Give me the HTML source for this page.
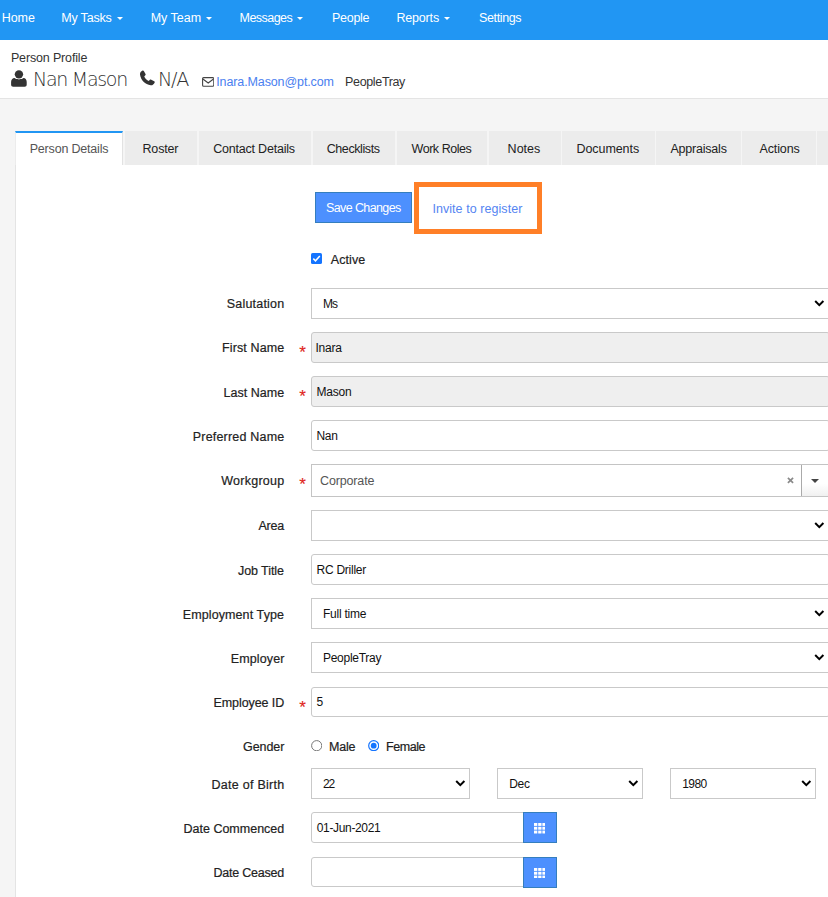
<!DOCTYPE html>
<html>
<head>
<meta charset="utf-8">
<title>Person Profile</title>
<style>
html,body{margin:0;padding:0;}
body{width:828px;height:897px;overflow:hidden;position:relative;background:#f5f5f5;font-family:"Liberation Sans","DejaVu Sans",sans-serif;font-size:12.5px;color:#333;}
.abs{position:absolute;}
.t{position:absolute;white-space:nowrap;}
#nav{left:0;top:0;width:828px;height:40px;background:#2196f3;}
.caret{position:absolute;width:0;height:0;border-left:3.8px solid transparent;border-right:3.8px solid transparent;border-top:3.6px solid #fff;top:16.6px;}
#head{left:0;top:40px;width:828px;height:58px;background:#fff;border-bottom:1px solid #e4e4e4;}
#tabbar{left:125px;top:131px;width:703px;height:33.5px;background:#ececec;}
.sep{position:absolute;top:131px;width:1.5px;height:33.5px;background:#f5f5f5;}
#tabact{left:15px;top:131px;width:107.7px;height:34px;background:#fff;border-top:2px solid #2196f3;border-right:1px solid #e2e2e2;border-left:1px solid #ececec;box-sizing:border-box;}
#panel{left:15px;top:164.5px;width:813px;height:733px;background:#fff;border-left:1px solid #e4e4e4;box-sizing:border-box;}
.inp{position:absolute;left:311px;width:519px;height:31px;box-sizing:border-box;border:1px solid #c9c9c9;border-radius:3px;background:#fff;}
.inp.dis{background:#efefef;}
.inp.sel{border-radius:0;}
.chev{position:absolute;width:11px;height:7px;}
.req{position:absolute;left:299.2px;color:#e0261c;font-size:17px;line-height:17px;white-space:nowrap;-webkit-text-stroke:0.15px #e0261c;}
.calb{position:absolute;left:523px;width:34px;height:31px;box-sizing:border-box;background:#4d90fe;border:1px solid #357ebd;}
</style>
</head>
<body>
<div id="nav" class="abs">
<span class="caret" style="left:117.2px"></span>
<span class="caret" style="left:205.9px"></span>
<span class="caret" style="left:297.3px"></span>
<span class="caret" style="left:444.1px"></span>
</div>
<div id="head" class="abs"></div>
<svg class="abs" style="left:11px;top:70px" width="16" height="17" viewBox="0 0 16 17"><path d="M0.1 12 C0.1 9.6 1.4 8.1 3.6 8 C5 9.6 11 9.6 12.4 8 C14.6 8.1 15.7 9.6 15.7 12 L15.7 14.7 C15.7 15.9 14.9 16.7 13.6 16.7 L2.2 16.7 C0.9 16.7 0.1 15.9 0.1 14.7 Z" fill="#333"/><circle cx="7.95" cy="4.35" r="5" fill="#fff"/><circle cx="7.95" cy="4.35" r="4.2" fill="#333"/></svg>
<svg class="abs" style="left:138.8px;top:70.2px" width="16.6" height="15.8" viewBox="0 0 16 16"><path d="M3.2 0.6 C3.7 0.3 4.2 0.5 4.5 1 L6.2 4 C6.5 4.5 6.4 5 6 5.4 L4.9 6.5 C5.8 8.4 7.6 10.2 9.5 11.1 L10.6 10 C11 9.6 11.5 9.5 12 9.8 L15 11.5 C15.5 11.8 15.7 12.3 15.4 12.8 C14.6 14.3 13.2 15.6 11.5 15.4 C5.8 14.6 1.4 10.2 0.6 4.5 C0.4 2.8 1.7 1.4 3.2 0.6 Z" fill="#333"/></svg>
<svg class="abs" style="left:202px;top:77.2px" width="12.4" height="9.8" viewBox="0 0 12.4 9.8"><rect x="0.6" y="0.6" width="11.2" height="8.6" rx="1" fill="none" stroke="#444" stroke-width="1.1"/><path d="M0.9 2 L6.2 6 L11.5 2" fill="none" stroke="#444" stroke-width="1.1"/></svg>
<div id="tabbar" class="abs"></div>
<div class="sep" style="left:197.0px"></div>
<div class="sep" style="left:311.0px"></div>
<div class="sep" style="left:395.3px"></div>
<div class="sep" style="left:487.0px"></div>
<div class="sep" style="left:560.6px"></div>
<div class="sep" style="left:654.5px"></div>
<div class="sep" style="left:740.7px"></div>
<div class="sep" style="left:815.5px"></div>
<div id="panel" class="abs"></div>
<div id="tabact" class="abs"></div>
<div class="abs" style="left:315px;top:192px;width:97px;height:31px;background:#4d90fe;border:1px solid #357ebd;box-sizing:border-box;"></div>
<div class="abs" style="left:414px;top:182px;width:128px;height:52px;box-sizing:border-box;border:5px solid #ff7f27;"></div>
<svg class="abs" style="left:311px;top:253px" width="11" height="11" viewBox="0 0 11 11"><rect x="0" y="0" width="11" height="11" rx="1.6" fill="#1474ff"/><path d="M2.3 5.6 L4.5 7.8 L8.8 3.1" fill="none" stroke="#fff" stroke-width="1.5"/></svg>
<div class="inp sel" style="top:288px;height:31px;left:311px;width:519px;"></div>
<svg class="chev" style="left:814px;top:300px" viewBox="0 0 11 7"><path d="M1.2 1 L5.3 5.1 L9.4 1" fill="none" stroke="#000" stroke-width="2"/></svg>
<div class="inp dis" style="top:332px;height:31px;left:311px;width:519px;"></div>
<div class="req" style="top:343.9px">*</div>
<div class="inp dis" style="top:376px;height:31px;left:311px;width:519px;"></div>
<div class="req" style="top:387.9px">*</div>
<div class="inp " style="top:420px;height:31px;left:311px;width:519px;"></div>
<div class="abs" style="left:311px;top:464px;width:519px;height:33px;box-sizing:border-box;border:1px solid #c4c4c4;background:#fff;"></div>
<div class="abs" style="left:801px;top:465px;width:29px;height:31px;border-left:1px solid #aaa;box-sizing:border-box;background:linear-gradient(#fff 60%,#f0f0f0);"></div>
<svg class="abs" style="left:787.4px;top:477.2px" width="7" height="6.6" viewBox="0 0 7 6.6"><path d="M0.9 0.8 L6.1 5.8 M6.1 0.8 L0.9 5.8" stroke="#8a8a8a" stroke-width="1.7" fill="none"/></svg>
<div class="abs" style="left:811.3px;top:478.8px;width:0;height:0;border-left:4px solid transparent;border-right:4px solid transparent;border-top:4.2px solid #444;"></div>
<div class="req" style="top:475.7px">*</div>
<div class="inp sel" style="top:510px;height:31px;left:311px;width:519px;"></div>
<svg class="chev" style="left:814px;top:522px" viewBox="0 0 11 7"><path d="M1.2 1 L5.3 5.1 L9.4 1" fill="none" stroke="#000" stroke-width="2"/></svg>
<div class="inp " style="top:554px;height:31px;left:311px;width:519px;"></div>
<div class="inp sel" style="top:598px;height:31px;left:311px;width:519px;"></div>
<svg class="chev" style="left:814px;top:610px" viewBox="0 0 11 7"><path d="M1.2 1 L5.3 5.1 L9.4 1" fill="none" stroke="#000" stroke-width="2"/></svg>
<div class="inp sel" style="top:642px;height:31px;left:311px;width:519px;"></div>
<svg class="chev" style="left:814px;top:654px" viewBox="0 0 11 7"><path d="M1.2 1 L5.3 5.1 L9.4 1" fill="none" stroke="#000" stroke-width="2"/></svg>
<div class="inp " style="top:687px;height:30px;left:311px;width:519px;"></div>
<div class="req" style="top:699.1999999999999px">*</div>
<svg class="abs" style="left:310.6px;top:740px" width="11.4" height="11.4" viewBox="0 0 11.4 11.4"><circle cx="5.7" cy="5.7" r="5.1" fill="#fff" stroke="#767676" stroke-width="1"/></svg>
<svg class="abs" style="left:367.6px;top:740px" width="11.4" height="11.4" viewBox="0 0 11.4 11.4"><circle cx="5.7" cy="5.7" r="5" fill="#fff" stroke="#1474ff" stroke-width="1.2"/><circle cx="5.7" cy="5.7" r="2.9" fill="#1474ff"/></svg>
<div class="inp sel" style="top:768px;height:31px;left:311px;width:159px;"></div>
<svg class="chev" style="left:454.8px;top:780px" viewBox="0 0 11 7"><path d="M1.2 1 L5.3 5.1 L9.4 1" fill="none" stroke="#000" stroke-width="2"/></svg>
<div class="inp sel" style="top:768px;height:31px;left:497px;width:146px;"></div>
<svg class="chev" style="left:627.6px;top:780px" viewBox="0 0 11 7"><path d="M1.2 1 L5.3 5.1 L9.4 1" fill="none" stroke="#000" stroke-width="2"/></svg>
<div class="inp sel" style="top:768px;height:31px;left:670px;width:146px;"></div>
<svg class="chev" style="left:800.6px;top:780px" viewBox="0 0 11 7"><path d="M1.2 1 L5.3 5.1 L9.4 1" fill="none" stroke="#000" stroke-width="2"/></svg>
<div class="inp " style="top:812px;height:31px;left:311px;width:213px;border-radius:3px 0 0 3px;"></div>
<div class="calb" style="top:812px"></div>
<div class="inp " style="top:857px;height:30px;left:311px;width:213px;border-radius:3px 0 0 3px;"></div>
<div class="calb" style="top:857px"></div>
<svg class="abs" style="left:533.6px;top:823.2px" width="11.7" height="10.5" viewBox="0 0 11.7 10.5"><g fill="#fff"><rect x="0.0" y="0.0" width="3.3" height="2.9"/><rect x="4.2" y="0.0" width="3.3" height="2.9"/><rect x="8.4" y="0.0" width="3.3" height="2.9"/><rect x="0.0" y="3.8" width="3.3" height="2.9"/><rect x="4.2" y="3.8" width="3.3" height="2.9"/><rect x="8.4" y="3.8" width="3.3" height="2.9"/><rect x="0.0" y="7.6" width="3.3" height="2.9"/><rect x="4.2" y="7.6" width="3.3" height="2.9"/><rect x="8.4" y="7.6" width="3.3" height="2.9"/></g></svg>
<svg class="abs" style="left:533.6px;top:867.6px" width="11.7" height="10.5" viewBox="0 0 11.7 10.5"><g fill="#fff"><rect x="0.0" y="0.0" width="3.3" height="2.9"/><rect x="4.2" y="0.0" width="3.3" height="2.9"/><rect x="8.4" y="0.0" width="3.3" height="2.9"/><rect x="0.0" y="3.8" width="3.3" height="2.9"/><rect x="4.2" y="3.8" width="3.3" height="2.9"/><rect x="8.4" y="3.8" width="3.3" height="2.9"/><rect x="0.0" y="7.6" width="3.3" height="2.9"/><rect x="4.2" y="7.6" width="3.3" height="2.9"/><rect x="8.4" y="7.6" width="3.3" height="2.9"/></g></svg>
<div class="t" style="left:1.70px;top:11.00px;font-size:12.5px;line-height:14px;color:#fff;letter-spacing:-0.031px;">Home</div>
<div class="t" style="left:61.30px;top:11.00px;font-size:12.5px;line-height:14px;color:#fff;letter-spacing:-0.205px;">My Tasks</div>
<div class="t" style="left:150.70px;top:11.00px;font-size:12.5px;line-height:14px;color:#fff;">My Team</div>
<div class="t" style="left:239.50px;top:11.00px;font-size:12.5px;line-height:14px;color:#fff;letter-spacing:-0.531px;">Messages</div>
<div class="t" style="left:332.00px;top:11.00px;font-size:12.5px;line-height:14px;color:#fff;letter-spacing:-0.274px;">People</div>
<div class="t" style="left:396.40px;top:11.00px;font-size:12.5px;line-height:14px;color:#fff;letter-spacing:-0.170px;">Reports</div>
<div class="t" style="left:479.00px;top:11.00px;font-size:12.5px;line-height:14px;color:#fff;letter-spacing:-0.374px;">Settings</div>
<div class="t" style="left:10.90px;top:51.00px;font-size:12.5px;line-height:14px;color:#333;letter-spacing:-0.151px;">Person Profile</div>
<div class="t" style="left:32.72px;top:68.00px;font-size:19.2px;line-height:23px;color:#333;letter-spacing:-1.300px;transform:scaleX(0.9901);transform-origin:0 0;font-family:'DejaVu Sans',sans-serif;font-weight:200;">Nan Mason</div>
<div class="t" style="left:157.80px;top:68.00px;font-size:19.2px;line-height:23px;color:#333;letter-spacing:-1.300px;transform:scaleX(0.9994);transform-origin:0 0;font-family:'DejaVu Sans',sans-serif;font-weight:200;">N/A</div>
<div class="t" style="left:216.20px;top:75.00px;font-size:12.5px;line-height:14px;color:#4a80f0;letter-spacing:-0.110px;">Inara.Mason@pt.com</div>
<div class="t" style="left:345.10px;top:75.00px;font-size:12.5px;line-height:14px;color:#333;letter-spacing:-0.356px;">PeopleTray</div>
<div class="t" style="left:29.70px;top:142.00px;font-size:12.5px;line-height:14px;color:#555;letter-spacing:-0.187px;">Person Details</div>
<div class="t" style="left:142.50px;top:142.00px;font-size:12.5px;line-height:14px;color:#222;letter-spacing:-0.171px;">Roster</div>
<div class="t" style="left:213.20px;top:142.00px;font-size:12.5px;line-height:14px;color:#222;letter-spacing:-0.208px;">Contact Details</div>
<div class="t" style="left:326.70px;top:142.00px;font-size:12.5px;line-height:14px;color:#222;letter-spacing:-0.401px;">Checklists</div>
<div class="t" style="left:411.60px;top:142.00px;font-size:12.5px;line-height:14px;color:#222;letter-spacing:-0.469px;">Work Roles</div>
<div class="t" style="left:507.60px;top:142.00px;font-size:12.5px;line-height:14px;color:#222;letter-spacing:0.024px;">Notes</div>
<div class="t" style="left:576.50px;top:142.00px;font-size:12.5px;line-height:14px;color:#222;letter-spacing:-0.071px;">Documents</div>
<div class="t" style="left:670.40px;top:142.00px;font-size:12.5px;line-height:14px;color:#222;letter-spacing:-0.201px;">Appraisals</div>
<div class="t" style="left:759.50px;top:142.00px;font-size:12.5px;line-height:14px;color:#222;letter-spacing:-0.124px;">Actions</div>
<div class="t" style="left:326.00px;top:201.00px;font-size:12.5px;line-height:14px;color:#fff;letter-spacing:-0.614px;">Save Changes</div>
<div class="t" style="left:432.40px;top:201.50px;font-size:12.5px;line-height:14px;color:#5585f2;letter-spacing:0.061px;">Invite to register</div>
<div class="t" style="left:330.80px;top:252.50px;font-size:12.5px;line-height:14px;color:#222;letter-spacing:0.083px;-webkit-text-stroke:0.2px #222;">Active</div>
<div class="t" style="left:226.75px;top:297.00px;font-size:12.5px;line-height:14px;color:#222;letter-spacing:0.206px;-webkit-text-stroke:0.2px #222;">Salutation</div>
<div class="t" style="left:222.00px;top:341.00px;font-size:12.5px;line-height:14px;color:#222;letter-spacing:0.121px;-webkit-text-stroke:0.2px #222;">First Name</div>
<div class="t" style="left:223.50px;top:385.50px;font-size:12.5px;line-height:14px;color:#222;letter-spacing:0.032px;-webkit-text-stroke:0.2px #222;">Last Name</div>
<div class="t" style="left:192.75px;top:430.00px;font-size:12.5px;line-height:14px;color:#222;letter-spacing:0.195px;-webkit-text-stroke:0.2px #222;">Preferred Name</div>
<div class="t" style="left:221.25px;top:474.00px;font-size:12.5px;line-height:14px;color:#222;letter-spacing:0.256px;-webkit-text-stroke:0.2px #222;">Workgroup</div>
<div class="t" style="left:258.50px;top:519.00px;font-size:12.5px;line-height:14px;color:#222;letter-spacing:-0.234px;-webkit-text-stroke:0.2px #222;">Area</div>
<div class="t" style="left:238.00px;top:563.50px;font-size:12.5px;line-height:14px;color:#222;letter-spacing:-0.072px;-webkit-text-stroke:0.2px #222;">Job Title</div>
<div class="t" style="left:182.75px;top:607.50px;font-size:12.5px;line-height:14px;color:#222;letter-spacing:0.101px;-webkit-text-stroke:0.2px #222;">Employment Type</div>
<div class="t" style="left:230.75px;top:651.50px;font-size:12.5px;line-height:14px;color:#222;letter-spacing:0.124px;-webkit-text-stroke:0.2px #222;">Employer</div>
<div class="t" style="left:213.50px;top:696.00px;font-size:12.5px;line-height:14px;color:#222;letter-spacing:-0.078px;-webkit-text-stroke:0.2px #222;">Employee ID</div>
<div class="t" style="left:243.00px;top:739.75px;font-size:12.5px;line-height:14px;color:#222;letter-spacing:-0.056px;-webkit-text-stroke:0.2px #222;">Gender</div>
<div class="t" style="left:211.50px;top:777.50px;font-size:12.5px;line-height:14px;color:#222;letter-spacing:0.269px;-webkit-text-stroke:0.2px #222;">Date of Birth</div>
<div class="t" style="left:183.50px;top:821.50px;font-size:12.5px;line-height:14px;color:#222;-webkit-text-stroke:0.2px #222;">Date Commenced</div>
<div class="t" style="left:213.50px;top:866.00px;font-size:12.5px;line-height:14px;color:#222;letter-spacing:-0.226px;-webkit-text-stroke:0.2px #222;">Date Ceased</div>
<div class="t" style="left:329.00px;top:739.75px;font-size:12.5px;line-height:14px;color:#222;letter-spacing:-0.214px;-webkit-text-stroke:0.2px #222;">Male</div>
<div class="t" style="left:386.00px;top:739.75px;font-size:12.5px;line-height:14px;color:#222;letter-spacing:-0.446px;-webkit-text-stroke:0.2px #222;">Female</div>
<div class="t" style="left:323.00px;top:297.00px;font-size:12px;line-height:14px;color:#111;letter-spacing:-0.996px;">Ms</div>
<div class="t" style="left:315.50px;top:341.00px;font-size:12px;line-height:14px;color:#111;letter-spacing:-0.219px;">Inara</div>
<div class="t" style="left:316.50px;top:385.00px;font-size:12px;line-height:14px;color:#111;letter-spacing:-0.211px;">Mason</div>
<div class="t" style="left:316.50px;top:429.00px;font-size:12px;line-height:14px;color:#111;letter-spacing:-0.320px;">Nan</div>
<div class="t" style="left:320.00px;top:474.00px;font-size:12.5px;line-height:14px;color:#555;letter-spacing:-0.142px;">Corporate</div>
<div class="t" style="left:316.50px;top:563.00px;font-size:12px;line-height:14px;color:#111;letter-spacing:-0.244px;">RC Driller</div>
<div class="t" style="left:322.90px;top:607.00px;font-size:12px;line-height:14px;color:#111;letter-spacing:-0.221px;">Full time</div>
<div class="t" style="left:322.90px;top:651.00px;font-size:12px;line-height:14px;color:#111;letter-spacing:-0.258px;">PeopleTray</div>
<div class="t" style="left:316.50px;top:695.00px;font-size:12px;line-height:14px;color:#111;">5</div>
<div class="t" style="left:322.90px;top:777.00px;font-size:12px;line-height:14px;color:#111;letter-spacing:-0.974px;">22</div>
<div class="t" style="left:509.20px;top:777.00px;font-size:12px;line-height:14px;color:#111;letter-spacing:-0.270px;">Dec</div>
<div class="t" style="left:682.20px;top:777.00px;font-size:12px;line-height:14px;color:#111;letter-spacing:-0.574px;">1980</div>
<div class="t" style="left:316.80px;top:821.00px;font-size:12px;line-height:14px;color:#111;letter-spacing:-0.351px;">01-Jun-2021</div>
</body>
</html>
